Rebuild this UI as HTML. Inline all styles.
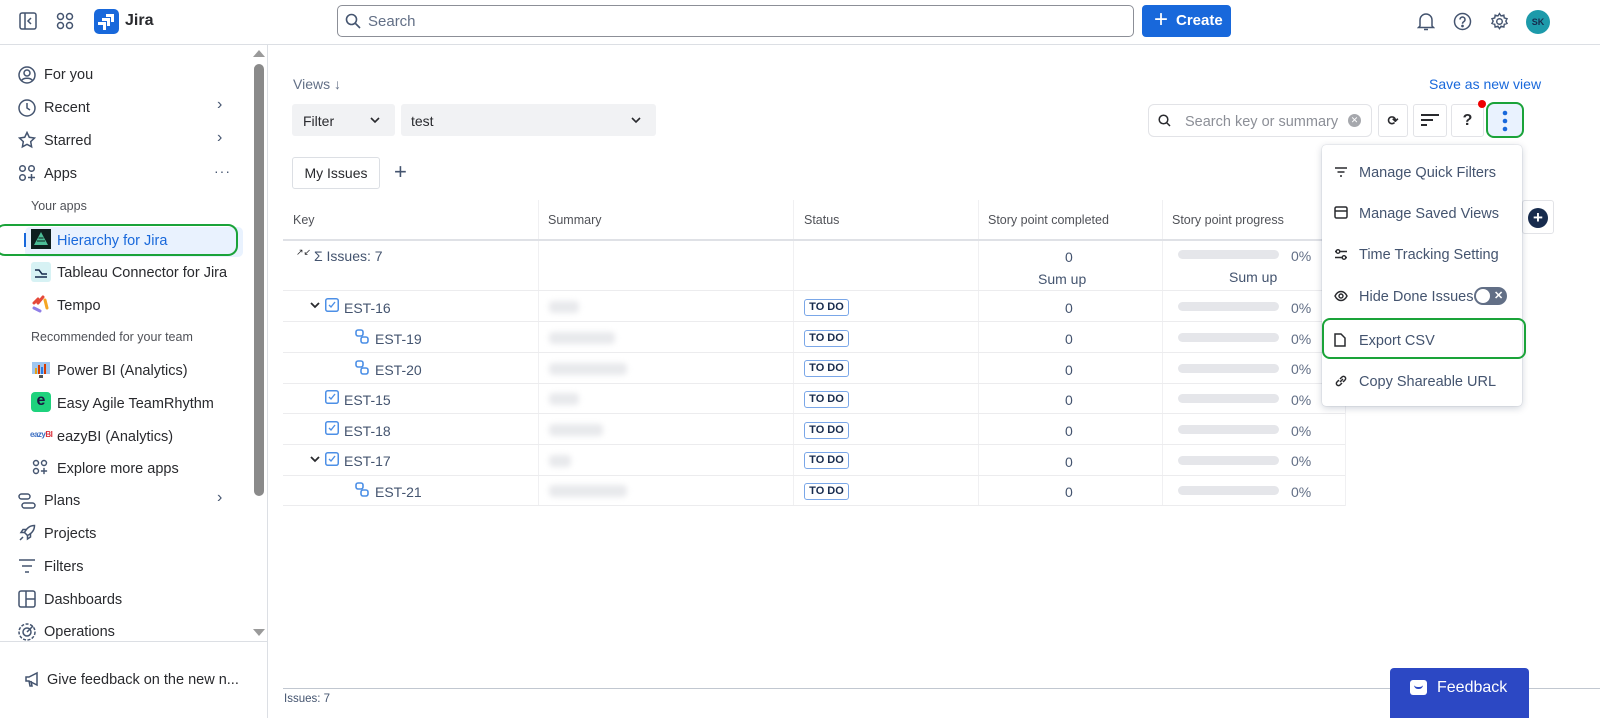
<!DOCTYPE html>
<html><head><meta charset="utf-8"><style>
*{box-sizing:border-box;margin:0;padding:0}
body{width:1600px;height:718px;overflow:hidden;background:#fff;font-family:"Liberation Sans",sans-serif;color:#292a2e;font-size:14px;position:relative}
.a{position:absolute}
.nav{position:absolute;left:44px;font-size:14.5px;color:#292a2e}
.ic{position:absolute;left:18px}
.sub{position:absolute;left:57px;font-size:14.5px}
.th{position:absolute;top:213px;font-size:12.5px;color:#505258}
.hl{position:absolute;left:283px;width:1062px;height:1px;background:#ececee}
.vl{position:absolute;top:200px;width:1px;height:306px;background:#f0f0f2}
.key{position:absolute;font-size:14px;color:#44546f}
.todo{position:absolute;left:804px;width:45px;height:17px;border:1px solid #7aa7e8;border-radius:3px;font-size:11px;font-weight:bold;text-align:center;line-height:15px;color:#172b4d}
.num{position:absolute;left:1065px;font-size:14px;color:#44546f}
.bar{position:absolute;left:1178px;width:101px;height:9px;border-radius:5px;background:#e5e6ea}
.pct{position:absolute;left:1291px;font-size:14px;color:#626f86}
.blur{position:absolute;left:549px;height:12px;background:#e8e9ec;border-radius:4px;filter:blur(3px)}
.mi{position:absolute;left:1359px;font-size:14.5px;color:#44546f}
.mic{position:absolute;left:1334px}
</style></head><body>
<div class="a" style="left:0;top:44px;width:1600px;height:1px;background:#dcdfe4"></div>
<svg class="a" style="left:19px;top:12px" width="18" height="18" viewBox="0 0 18 18" fill="none" stroke="#44546f" stroke-width="1.5"><rect x="1" y="1" width="16" height="16" rx="2"/><line x1="6" y1="1" x2="6" y2="17"/><path d="M12 6l-3 3 3 3"/></svg>
<svg class="a" style="left:56px;top:12px" width="18" height="18" viewBox="0 0 18 18" fill="none" stroke="#44546f" stroke-width="1.5"><circle cx="4.5" cy="4.5" r="3"/><circle cx="13.5" cy="4.5" r="3"/><circle cx="4.5" cy="13.5" r="3"/><circle cx="13.5" cy="13.5" r="3"/></svg>
<div class="a" style="left:94px;top:9px;width:25px;height:25px;border-radius:5px;background:#1868db"></div>
<svg class="a" style="left:98px;top:13px" width="17" height="17" viewBox="0 0 17 17" fill="#fff"><path d="M8 1h8v8h-3V4H8z"/><path d="M4 5h8v8H9V8H4z"/><path d="M0 9h8v8H5v-5H0z"/></svg>
<div class="a" style="left:125px;top:12px;font-size:16px;font-weight:bold;color:#292a2e">Jira</div>
<div class="a" style="left:337px;top:5px;width:797px;height:32px;border:1px solid #8c8f97;border-radius:5px"></div>
<svg class="a" style="left:345px;top:13px" width="16" height="16" viewBox="0 0 16 16" fill="none" stroke="#44546f" stroke-width="1.6"><circle cx="6.5" cy="6.5" r="5"/><path d="M10.5 10.5L15 15"/></svg>
<div class="a" style="left:368px;top:13px;font-size:15px;color:#626f86">Search</div>
<div class="a" style="left:1142px;top:5px;width:89px;height:32px;background:#1868db;border-radius:4px;color:#fff;font-weight:bold;font-size:15px;line-height:32px;padding-left:34px">Create</div>
<div class="a" style="left:1154px;top:7px;color:#fff;font-size:24px;line-height:26px">+</div>
<svg class="a" style="left:1417px;top:12px" width="18" height="19" viewBox="0 0 18 19" fill="none" stroke="#44546f" stroke-width="1.5"><path d="M3 14V8a6 6 0 0112 0v6l1.5 1.5h-15z"/><path d="M7 17.5h4"/></svg>
<svg class="a" style="left:1453px;top:12px" width="19" height="19" viewBox="0 0 19 19" fill="none" stroke="#44546f" stroke-width="1.5"><circle cx="9.5" cy="9.5" r="8"/><path d="M7 7.5a2.5 2.5 0 114 2c-1 .6-1.5 1-1.5 2.2"/><circle cx="9.5" cy="14" r=".6" fill="#44546f"/></svg>
<svg class="a" style="left:1490px;top:12px" width="19" height="19" viewBox="0 0 24 24" fill="none" stroke="#44546f" stroke-width="1.8"><circle cx="12" cy="12" r="3.5"/><path d="M12 2l2 3 3.5-1 .5 3.5 3.5 1-1.5 3 1.5 3-3.5 1-.5 3.5-3.5-1-2 3-2-3-3.5 1-.5-3.5-3.5-1 1.5-3-1.5-3 3.5-1 .5-3.5 3.5 1z"/></svg>
<div class="a" style="left:1526px;top:10px;width:24px;height:24px;border-radius:50%;background:#1d9aaa;color:#172b4d;font-size:9px;font-weight:bold;text-align:center;line-height:24px">SK</div>

<div class="a" style="left:267px;top:45px;width:1px;height:673px;background:#dcdfe4"></div>
<div class="a" style="left:254px;top:64px;width:10px;height:432px;border-radius:5px;background:#8a8a8a"></div>
<div class="a" style="left:253px;top:50px;width:0;height:0;border-left:6px solid transparent;border-right:6px solid transparent;border-bottom:7px solid #9a9a9a"></div>
<div class="a" style="left:253px;top:629px;width:0;height:0;border-left:6px solid transparent;border-right:6px solid transparent;border-top:7px solid #9a9a9a"></div>
<div class="a" style="left:0;top:641px;width:267px;height:1px;background:#dcdfe4"></div>

<svg class="ic" style="top:66px" width="18" height="18" viewBox="0 0 18 18" fill="none" stroke="#44546f" stroke-width="1.5"><circle cx="9" cy="9" r="8"/><circle cx="9" cy="7" r="3"/><path d="M3.5 14.5c2-3 9-3 11 0"/></svg>
<div class="nav" style="top:67px">For you</div>
<svg class="ic" style="top:99px" width="18" height="18" viewBox="0 0 18 18" fill="none" stroke="#44546f" stroke-width="1.5"><circle cx="9" cy="9" r="8"/><path d="M9 4v5l3 2"/></svg>
<div class="nav" style="top:100px">Recent</div>
<div class="a" style="left:217px;top:96px;font-size:16px;color:#44546f">›</div>
<svg class="ic" style="top:131px" width="18" height="18" viewBox="0 0 18 18" fill="none" stroke="#44546f" stroke-width="1.5"><path d="M9 1.5l2.3 4.8 5.2.7-3.8 3.6.9 5.2L9 13.3l-4.6 2.5.9-5.2L1.5 7l5.2-.7z"/></svg>
<div class="nav" style="top:133px">Starred</div>
<div class="a" style="left:217px;top:129px;font-size:16px;color:#44546f">›</div>
<svg class="ic" style="top:164px" width="18" height="18" viewBox="0 0 18 18" fill="none" stroke="#44546f" stroke-width="1.5"><circle cx="4.5" cy="4.5" r="2.8"/><circle cx="13.5" cy="4.5" r="2.8"/><circle cx="4.5" cy="13.5" r="2.8"/><path d="M13.5 10v7M10 13.5h7"/></svg>
<div class="nav" style="top:166px">Apps</div>
<div class="a" style="left:214px;top:163px;font-size:14px;color:#44546f;letter-spacing:1px">···</div>
<div class="a" style="left:31px;top:199px;font-size:12.5px;color:#505258">Your apps</div>
<div class="a" style="left:25px;top:227px;width:218px;height:30px;background:#e9f2fe;border-radius:5px"></div>
<div class="a" style="left:-5px;top:224px;width:243px;height:32px;border:2.5px solid #1aa339;border-radius:10px"></div>
<div class="a" style="left:24px;top:233px;width:2px;height:14px;background:#1868db"></div>
<div class="a" style="left:31px;top:229px;width:20px;height:20px;background:#0f1e1e"></div>
<svg class="a" style="left:33px;top:231px" width="16" height="16" viewBox="0 0 16 16"><path d="M8 1l7 13H1z" fill="#4dbd97"/><path d="M4 10h8M5.5 7h5" stroke="#0f1e1e"/></svg>
<div class="sub" style="top:233px;color:#1868db">Hierarchy for Jira</div>
<div class="a" style="left:31px;top:262px;width:20px;height:20px;background:#d7f2f4;border-radius:3px"></div>
<svg class="a" style="left:33px;top:264px" width="16" height="16" viewBox="0 0 16 16" fill="none" stroke="#172b4d" stroke-width="1.5"><path d="M2 6h4l3 4h5M2 13h12"/></svg>
<div class="sub" style="top:265px">Tableau Connector for Jira</div>
<svg class="a" style="left:31px;top:294px" width="20" height="20" viewBox="0 0 20 20" fill="none" stroke-width="3" stroke-linecap="round"><path d="M3 9l4-4M7 9l5-6" stroke="#e5493a"/><path d="M3 14l6 3" stroke="#8f7ee7"/><path d="M14 6l2 8" stroke="#f5a623"/></svg>
<div class="sub" style="top:298px">Tempo</div>
<div class="a" style="left:31px;top:330px;font-size:12.5px;color:#505258">Recommended for your team</div>
<svg class="a" style="left:31px;top:360px" width="20" height="20" viewBox="0 0 20 20"><rect x="1" y="2" width="18" height="12" fill="#9fc6ef"/><rect x="4" y="8" width="2" height="6" fill="#e0a21b"/><rect x="7" y="5" width="2" height="9" fill="#d83b01"/><rect x="10" y="7" width="2" height="7" fill="#2c7be5"/><rect x="13" y="4" width="2" height="10" fill="#d83b01"/><rect x="8" y="15" width="4" height="3" fill="#555"/></svg>
<div class="sub" style="top:363px">Power BI (Analytics)</div>
<div class="a" style="left:31px;top:392px;width:20px;height:20px;background:#1ed27d;border-radius:4px;font-weight:bold;color:#1b1442;text-align:center;font-size:16px;line-height:17px">e</div>
<div class="sub" style="top:396px">Easy Agile TeamRhythm</div>
<div class="a" style="left:30px;top:430px;font-size:8px;font-weight:bold;color:#3b6ec2;letter-spacing:-.5px">eazy<span style="color:#d9303b">BI</span></div>
<div class="sub" style="top:429px">eazyBI (Analytics)</div>
<svg class="a" style="left:32px;top:459px" width="16" height="16" viewBox="0 0 18 18" fill="none" stroke="#44546f" stroke-width="1.6"><circle cx="4.5" cy="4.5" r="2.8"/><circle cx="13.5" cy="4.5" r="2.8"/><circle cx="4.5" cy="13.5" r="2.8"/><path d="M13.5 10v7M10 13.5h7"/></svg>
<div class="sub" style="top:461px">Explore more apps</div>
<svg class="ic" style="top:492px" width="18" height="18" viewBox="0 0 18 18" fill="none" stroke="#44546f" stroke-width="1.5"><rect x="1" y="2" width="11" height="5" rx="2.5"/><rect x="4" y="11" width="13" height="5" rx="2.5"/></svg>
<div class="nav" style="top:493px">Plans</div>
<div class="a" style="left:217px;top:489px;font-size:16px;color:#44546f">›</div>
<svg class="ic" style="top:524px" width="18" height="18" viewBox="0 0 18 18" fill="none" stroke="#44546f" stroke-width="1.5"><path d="M16.5 1.5c-5 0-8 3-10 7l3 3c4-2 7-5 7-10z"/><path d="M6.5 8.5H3l2-3h4M9.5 11.5V15l3-2V9M5 13l-3 3"/></svg>
<div class="nav" style="top:526px">Projects</div>
<svg class="ic" style="top:557px" width="18" height="18" viewBox="0 0 18 18" fill="none" stroke="#44546f" stroke-width="1.5"><path d="M1 3h16M4 9h10M7 15h4"/></svg>
<div class="nav" style="top:559px">Filters</div>
<svg class="ic" style="top:590px" width="18" height="18" viewBox="0 0 18 18" fill="none" stroke="#44546f" stroke-width="1.5"><rect x="1" y="1" width="16" height="16" rx="2"/><path d="M8 1v16M8 9h9"/></svg>
<div class="nav" style="top:592px">Dashboards</div>
<svg class="ic" style="top:623px" width="18" height="18" viewBox="0 0 18 18" fill="none" stroke="#44546f" stroke-width="1.5"><circle cx="9" cy="9" r="8" stroke-dasharray="3 1.5"/><circle cx="9" cy="9" r="4"/><path d="M9 9l6-6"/></svg>
<div class="nav" style="top:624px">Operations</div>
<svg class="a" style="left:24px;top:670px" width="18" height="18" viewBox="0 0 18 18" fill="none" stroke="#44546f" stroke-width="1.5"><path d="M2 7v4h3l8 4V3L5 7z"/><path d="M5 11l1 5h2l-1-5"/></svg>
<div class="a" style="left:47px;top:672px;font-size:14.5px">Give feedback on the new n...</div>

<div class="a" style="left:293px;top:76px;font-size:14px;color:#626f86">Views ↓</div>
<div class="a" style="left:1429px;top:76px;font-size:14px;color:#1868db">Save as new view</div>
<div class="a" style="left:292px;top:104px;width:103px;height:32px;background:#f1f2f4;border-radius:3px"></div>
<div class="a" style="left:303px;top:113px;font-size:14px">Filter</div>
<svg class="a" style="left:370px;top:116px" width="10" height="8" viewBox="0 0 10 8" fill="none" stroke="#292a2e" stroke-width="1.6"><path d="M1 2l4 4 4-4"/></svg>
<div class="a" style="left:401px;top:104px;width:255px;height:32px;background:#f1f2f4;border-radius:3px"></div>
<div class="a" style="left:411px;top:113px;font-size:14px">test</div>
<svg class="a" style="left:631px;top:116px" width="10" height="8" viewBox="0 0 10 8" fill="none" stroke="#292a2e" stroke-width="1.6"><path d="M1 2l4 4 4-4"/></svg>

<div class="a" style="left:1148px;top:104px;width:224px;height:33px;border:1px solid #e2e3e7;border-radius:6px"></div>
<svg class="a" style="left:1158px;top:114px" width="13" height="13" viewBox="0 0 13 13" fill="none" stroke="#292a2e" stroke-width="1.5"><circle cx="5.5" cy="5.5" r="4.3"/><path d="M8.5 8.5L12 12"/></svg>
<div class="a" style="left:1185px;top:114px;font-size:14.5px;color:#8c8f97">Search key or summary</div>
<div class="a" style="left:1348px;top:114px;width:13px;height:13px;border-radius:50%;background:#a6a8ad;color:#fff;font-size:9px;text-align:center;line-height:13px">✕</div>
<div class="a" style="left:1378px;top:104px;width:30px;height:33px;border:1px solid #e2e3e7;border-radius:3px;text-align:center;line-height:31px;font-size:13px;font-weight:bold">⟳</div>
<div class="a" style="left:1413px;top:104px;width:34px;height:33px;border:1px solid #e2e3e7;border-radius:3px"></div>
<svg class="a" style="left:1420px;top:113px" width="20" height="15" viewBox="0 0 20 15" stroke="#292a2e" stroke-width="2"><path d="M1 2h18M1 7h12M1 12h6"/></svg>
<div class="a" style="left:1451px;top:104px;width:33px;height:33px;border:1px solid #e2e3e7;border-radius:3px;text-align:center;line-height:31px;font-size:16px;font-weight:bold">?</div>
<div class="a" style="left:1478px;top:100px;width:8px;height:8px;border-radius:50%;background:#e00"></div>
<div class="a" style="left:1488px;top:104px;width:34px;height:33px;background:#e9f2fe;border-radius:3px"></div>
<div class="a" style="left:1486px;top:102px;width:38px;height:36px;border:2.5px solid #1aa339;border-radius:8px"></div>
<svg class="a" style="left:1502px;top:110px" width="6" height="22" viewBox="0 0 6 22" fill="#1868db"><circle cx="3" cy="3" r="2.3"/><circle cx="3" cy="11" r="2.3"/><circle cx="3" cy="19" r="2.3"/></svg>

<div class="a" style="left:292px;top:157px;width:88px;height:32px;border:1px solid #dcdfe4;border-radius:3px;font-size:14px;line-height:30px;text-align:center">My Issues</div>
<div class="a" style="left:394px;top:159px;font-size:22px;font-weight:300;color:#44546f">+</div>

<div class="th" style="left:293px">Key</div>
<div class="th" style="left:548px">Summary</div>
<div class="th" style="left:804px">Status</div>
<div class="th" style="left:988px">Story point completed</div>
<div class="th" style="left:1172px">Story point progress</div>
<div class="vl" style="left:538px"></div><div class="vl" style="left:793px"></div><div class="vl" style="left:978px"></div><div class="vl" style="left:1162px"></div><div class="vl" style="left:1345px;top:240px;height:266px"></div>
<div class="hl" style="top:239px;height:2px;background:#dfe1e6"></div>
<div class="hl" style="top:290px"></div><div class="hl" style="top:321px"></div><div class="hl" style="top:352px"></div><div class="hl" style="top:383px"></div><div class="hl" style="top:413px"></div><div class="hl" style="top:444px"></div><div class="hl" style="top:475px"></div><div class="hl" style="top:505px"></div>
<div class="a" style="left:1522px;top:200px;width:32px;height:34px;border:1px solid #e2e3e7;border-radius:3px"></div>
<div class="a" style="left:1528px;top:208px;width:20px;height:20px;border-radius:50%;background:#172b4d;color:#fff;text-align:center;line-height:19px;font-weight:bold;font-size:17px">+</div>

<div class="a" style="left:296px;top:247px;font-size:9px;color:#292a2e">↗↙</div>
<div class="key" style="left:314px;top:248px">Σ Issues: 7</div>
<div class="num" style="top:249px">0</div><div class="a" style="left:1038px;top:271px;font-size:14px;color:#44546f">Sum up</div>
<div class="bar" style="top:250px"></div><div class="pct" style="top:248px">0%</div><div class="a" style="left:1229px;top:269px;font-size:14px;color:#44546f">Sum up</div>

<svg class="a" style="left:310px;top:302px" width="10" height="7" viewBox="0 0 10 7" fill="none" stroke="#292a2e" stroke-width="1.8"><path d="M1 1l4 4 4-4"/></svg>
<svg class="a" style="left:310px;top:456px" width="10" height="7" viewBox="0 0 10 7" fill="none" stroke="#292a2e" stroke-width="1.8"><path d="M1 1l4 4 4-4"/></svg>
<svg class="a" style="left:325px;top:298px" width="14" height="14"><rect x=".75" y=".75" width="12.5" height="12.5" rx="2" fill="none" stroke="#4c8fe6" stroke-width="1.5"/><path d="M4 7l2 2 4-5" fill="none" stroke="#4c8fe6" stroke-width="1.4"/></svg>
<div class="key" style="left:344px;top:300px">EST-16</div>
<svg class="a" style="left:355px;top:329px" width="14" height="15" viewBox="0 0 14 15" fill="none" stroke="#4c8fe6" stroke-width="1.6"><rect x="1" y="1" width="7" height="6" rx="2"/><rect x="6" y="8" width="7" height="6" rx="2"/></svg>
<div class="key" style="left:375px;top:331px">EST-19</div>
<svg class="a" style="left:355px;top:360px" width="14" height="15" viewBox="0 0 14 15" fill="none" stroke="#4c8fe6" stroke-width="1.6"><rect x="1" y="1" width="7" height="6" rx="2"/><rect x="6" y="8" width="7" height="6" rx="2"/></svg>
<div class="key" style="left:375px;top:362px">EST-20</div>
<svg class="a" style="left:325px;top:390px" width="14" height="14"><rect x=".75" y=".75" width="12.5" height="12.5" rx="2" fill="none" stroke="#4c8fe6" stroke-width="1.5"/><path d="M4 7l2 2 4-5" fill="none" stroke="#4c8fe6" stroke-width="1.4"/></svg>
<div class="key" style="left:344px;top:392px">EST-15</div>
<svg class="a" style="left:325px;top:421px" width="14" height="14"><rect x=".75" y=".75" width="12.5" height="12.5" rx="2" fill="none" stroke="#4c8fe6" stroke-width="1.5"/><path d="M4 7l2 2 4-5" fill="none" stroke="#4c8fe6" stroke-width="1.4"/></svg>
<div class="key" style="left:344px;top:423px">EST-18</div>
<svg class="a" style="left:325px;top:452px" width="14" height="14"><rect x=".75" y=".75" width="12.5" height="12.5" rx="2" fill="none" stroke="#4c8fe6" stroke-width="1.5"/><path d="M4 7l2 2 4-5" fill="none" stroke="#4c8fe6" stroke-width="1.4"/></svg>
<div class="key" style="left:344px;top:453px">EST-17</div>
<svg class="a" style="left:355px;top:482px" width="14" height="15" viewBox="0 0 14 15" fill="none" stroke="#4c8fe6" stroke-width="1.6"><rect x="1" y="1" width="7" height="6" rx="2"/><rect x="6" y="8" width="7" height="6" rx="2"/></svg>
<div class="key" style="left:375px;top:484px">EST-21</div>

<div class="blur" style="top:301px;width:30px"></div>
<div class="blur" style="top:332px;width:66px"></div>
<div class="blur" style="top:363px;width:78px"></div>
<div class="blur" style="top:393px;width:30px"></div>
<div class="blur" style="top:424px;width:54px"></div>
<div class="blur" style="top:455px;width:22px"></div>
<div class="blur" style="top:485px;width:78px"></div>

<div class="todo" style="top:299px">TO DO</div><div class="todo" style="top:330px">TO DO</div><div class="todo" style="top:360px">TO DO</div><div class="todo" style="top:391px">TO DO</div><div class="todo" style="top:422px">TO DO</div><div class="todo" style="top:452px">TO DO</div><div class="todo" style="top:483px">TO DO</div>
<div class="num" style="top:300px">0</div><div class="num" style="top:331px">0</div><div class="num" style="top:362px">0</div><div class="num" style="top:392px">0</div><div class="num" style="top:423px">0</div><div class="num" style="top:454px">0</div><div class="num" style="top:484px">0</div>
<div class="bar" style="top:302px"></div><div class="bar" style="top:333px"></div><div class="bar" style="top:364px"></div><div class="bar" style="top:394px"></div><div class="bar" style="top:425px"></div><div class="bar" style="top:456px"></div><div class="bar" style="top:486px"></div>
<div class="pct" style="top:300px">0%</div><div class="pct" style="top:331px">0%</div><div class="pct" style="top:361px">0%</div><div class="pct" style="top:392px">0%</div><div class="pct" style="top:423px">0%</div><div class="pct" style="top:453px">0%</div><div class="pct" style="top:484px">0%</div>

<div class="a" style="left:1322px;top:145px;width:200px;height:261px;background:#fff;border-radius:4px;box-shadow:0 2px 8px rgba(9,30,66,.2),0 0 1px rgba(9,30,66,.3)"></div>
<svg class="mic" style="top:166px" width="14" height="12" viewBox="0 0 14 12" stroke="#292a2e" stroke-width="1.5"><path d="M1 2h12M3.5 6h7M6 10h2"/></svg>
<div class="mi" style="top:165px">Manage Quick Filters</div>
<svg class="mic" style="top:206px" width="14" height="13" viewBox="0 0 14 13" fill="none" stroke="#292a2e" stroke-width="1.5"><rect x="1" y="1" width="12" height="11" rx="1.5"/><path d="M1 5h12"/></svg>
<div class="mi" style="top:206px">Manage Saved Views</div>
<svg class="mic" style="top:248px" width="14" height="13" viewBox="0 0 14 13" fill="none" stroke="#292a2e" stroke-width="1.4"><path d="M1 3.5h12M1 9.5h12"/><circle cx="4" cy="3.5" r="1.8" fill="#fff"/><circle cx="10" cy="9.5" r="1.8" fill="#fff"/></svg>
<div class="mi" style="top:247px">Time Tracking Setting</div>
<svg class="mic" style="top:290px" width="14" height="12" viewBox="0 0 14 12" fill="none" stroke="#292a2e" stroke-width="1.4"><path d="M1 6c3-6 9-6 12 0-3 6-9 6-12 0z"/><circle cx="7" cy="6" r="2"/></svg>
<div class="mi" style="top:289px">Hide Done Issues</div>
<div class="a" style="left:1474px;top:287px;width:33px;height:18px;border-radius:9px;background:#626f86"></div>
<div class="a" style="left:1476px;top:289px;width:14px;height:14px;border-radius:50%;background:#fff"></div>
<div class="a" style="left:1494px;top:287px;color:#fff;font-size:11px;font-weight:bold;line-height:18px">✕</div>
<div class="a" style="left:1322px;top:318px;width:204px;height:41px;border:2.5px solid #1aa339;border-radius:8px"></div>
<svg class="mic" style="top:333px" width="12" height="14" viewBox="0 0 12 14" fill="none" stroke="#292a2e" stroke-width="1.5"><path d="M1 1h6l4 4v8H1z"/></svg>
<div class="mi" style="top:333px">Export CSV</div>
<svg class="mic" style="top:374px" width="14" height="14" viewBox="0 0 14 14" fill="none" stroke="#292a2e" stroke-width="1.5"><path d="M6 8l3-3M5 6L3 8a2 2 0 003 3l2-2M9 8l2-2a2 2 0 00-3-3L6 5"/></svg>
<div class="mi" style="top:374px">Copy Shareable URL</div>

<div class="a" style="left:283px;top:688px;width:1317px;height:1px;background:#c1c7d0"></div>
<div class="a" style="left:284px;top:693px;font-size:11.5px;color:#44546f">Issues: 7</div>
<div class="a" style="left:1390px;top:668px;width:139px;height:50px;background:#2c48c4;border-radius:4px 4px 0 0"></div>
<div class="a" style="left:1410px;top:680px;width:17px;height:15px;background:#fff;border-radius:3px"></div>
<div class="a" style="left:1414px;top:685px;width:9px;height:4px;border-bottom:2px solid #2c48c4;border-radius:0 0 5px 5px"></div>
<div class="a" style="left:1437px;top:679px;color:#fff;font-size:16px">Feedback</div>
</body></html>
